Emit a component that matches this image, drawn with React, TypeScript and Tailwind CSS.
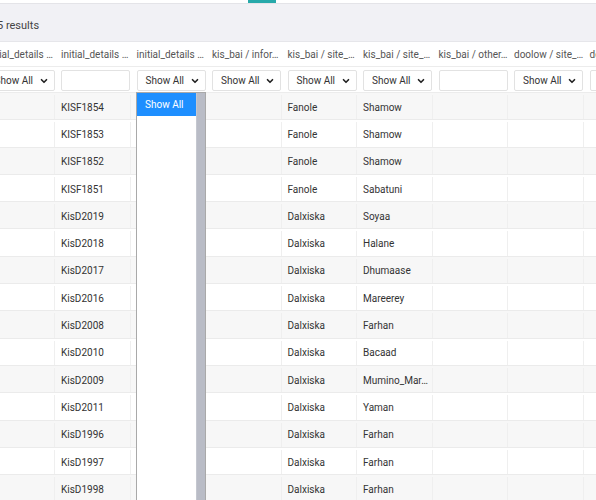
import React from "react";
import { ChevronDown } from "lucide-react";

const headers = [
  "initial_details …",
  "initial_details …",
  "initial_details …",
  "kis_bai / infor…",
  "kis_bai / site_…",
  "kis_bai / site_…",
  "kis_bai / other…",
  "doolow / site_…",
  "doolow / site_…",
];

const filters = ["select", "input", "select", "select", "select", "select", "input", "select", "select"];

const rows: [string, string, string][] = [
  ["KISF1854", "Fanole", "Shamow"],
  ["KISF1853", "Fanole", "Shamow"],
  ["KISF1852", "Fanole", "Shamow"],
  ["KISF1851", "Fanole", "Sabatuni"],
  ["KisD2019", "Dalxiska", "Soyaa"],
  ["KisD2018", "Dalxiska", "Halane"],
  ["KisD2017", "Dalxiska", "Dhumaase"],
  ["KisD2016", "Dalxiska", "Mareerey"],
  ["KisD2008", "Dalxiska", "Farhan"],
  ["KisD2010", "Dalxiska", "Bacaad"],
  ["KisD2009", "Dalxiska", "Mumino_Mar…"],
  ["KisD2011", "Dalxiska", "Yaman"],
  ["KisD1996", "Dalxiska", "Farhan"],
  ["KisD1997", "Dalxiska", "Farhan"],
  ["KisD1998", "Dalxiska", "Farhan"],
];

function Select() {
  return (
    <div className="flex h-[21px] w-[69px] shrink-0 items-center justify-between rounded-[2px] border border-[#e2e2e2] bg-white pl-[8px] pr-[5px] text-[10px] text-[#333]">
      <span className="whitespace-nowrap">Show All</span>
      <ChevronDown size={10} strokeWidth={4} className="text-[#222]" />
    </div>
  );
}

function Input() {
  return <div className="h-[21px] w-[69px] shrink-0 rounded-[2px] border border-[#e2e2e2] bg-white" />;
}

export default function App() {
  return (
    <div
      className="relative h-[500px] w-[596px] overflow-hidden bg-white text-[#333]"
      style={{ fontFamily: "Roboto, 'Liberation Sans', sans-serif" }}
    >
      {/* top strip */}
      <div className="h-[4px] border-b border-[#e4e4e8] bg-white">
        <div className="ml-[248px] h-[3px] w-[28px] bg-[#27a9aa]" />
      </div>
      {/* results bar */}
      <div className="flex h-[38px] items-center border-b border-[#e6e6ea] bg-[#f1f1f5] pt-[8px]">
        <span className="ml-[-3px] text-[11px] text-[#444]">5 results</span>
      </div>

      <div className="ml-[-20.5px] w-[700px]">
        {/* header row */}
        <div className="flex h-[25px] items-center border-b border-[#ececec] bg-white">
          {headers.map((h, i) => (
            <div key={i} className="w-[75.5px] shrink-0 overflow-hidden whitespace-nowrap pl-[6px] text-[10px] text-[#555]">
              {h}
            </div>
          ))}
        </div>
        {/* filter row */}
        <div className="flex h-[26px] items-start border-b border-[#ececec] bg-white pt-[3px]">
          {filters.map((f, i) => (
            <div key={i} className="flex w-[75.5px] shrink-0 pl-[6px]">
              {f === "select" ? <Select /> : <Input />}
            </div>
          ))}
        </div>
        {/* body */}
        {rows.map((r, ri) => (
          <div
            key={ri}
            className={`flex h-[27.3px] items-center border-b border-[#ebebeb] pt-[2px] ${ri % 2 === 0 ? "bg-[#f7f7f7]" : "bg-white"}`}
          >
            {Array.from({ length: 9 }).map((_, ci) => {
              let text = "";
              if (ci === 1) text = r[0];
              if (ci === 4) text = r[1];
              if (ci === 5) text = r[2];
              return (
                <div
                  key={ci}
                  className="flex h-full w-[75.5px] shrink-0 items-center overflow-hidden whitespace-nowrap border-r border-[#efefef] pl-[6px] text-[10px] text-[#333]"
                >
                  {text}
                </div>
              );
            })}
          </div>
        ))}
      </div>

      {/* open dropdown list */}
      <div className="absolute left-[136px] top-[92px] flex h-[420px] w-[70px] border border-[#a9a9a9] bg-white">
        <div className="flex-1">
          <div className="flex h-[23px] items-center bg-[#1e8fff] pl-[8px] text-[10px] text-white">Show All</div>
        </div>
        <div className="w-[9px] border-l border-[#c4c7cf] bg-[#b9bcc6]" />
      </div>
    </div>
  );
}
